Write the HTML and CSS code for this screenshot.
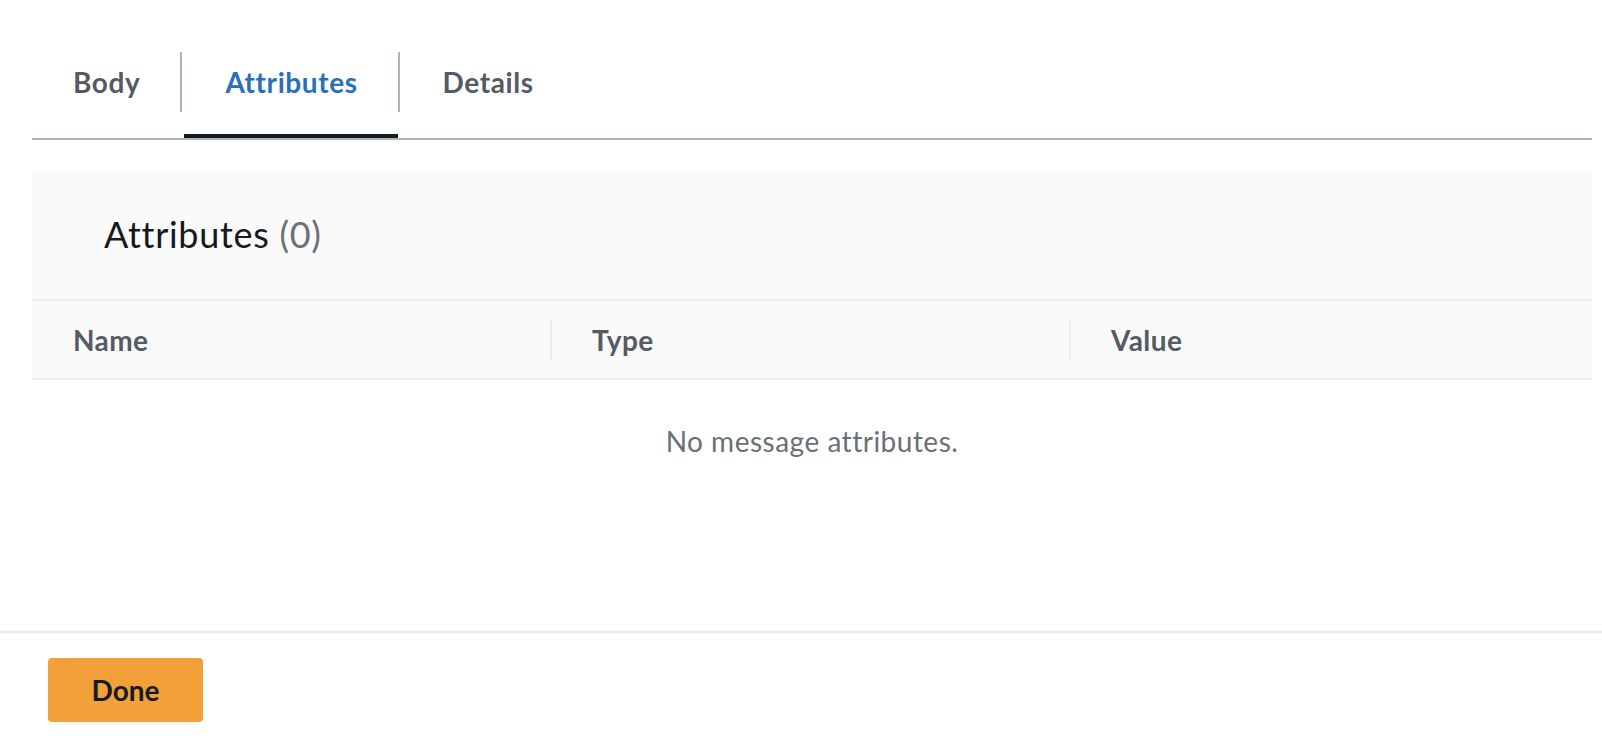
FILE: index.html
```html
<!DOCTYPE html>
<html lang="en">
<head>
    <meta charset="UTF-8">
    <meta name="viewport" content="width=device-width, initial-scale=1.0">
    <title>Message - Attributes</title>
    <link rel="stylesheet" href="styles.css">
</head>
<body>

<div class="content">
    <!-- Tabs -->
    <div class="tab-list">
        <a class="tab" href="#">Body</a>
        <span class="tab-divider"></span>
        <a class="tab active" href="#">Attributes</a>
        <span class="tab-divider"></span>
        <a class="tab" href="#">Details</a>
    </div>

    <!-- Attributes table -->
    <div class="table-container">
        <div class="table-header">
            <h2>Attributes <span class="counter">(0)</span></h2>
        </div>
        <div class="table-row table-head">
            <div class="cell">Name</div>
            <div class="cell"><span class="cell-inner">Type</span></div>
            <div class="cell"><span class="cell-inner">Value</span></div>
        </div>
        <div class="empty">No message attributes.</div>
    </div>
</div>

<!-- Footer -->
<div class="footer">
    <button class="btn-primary">Done</button>
</div>

</body>
</html>
```

FILE: styles.css
```css
/* General Styles */
body {
    font-family: Lato, "Liberation Sans", Arial, sans-serif;
    margin: 0;
    padding: 0;
    background-color: #ffffff;
    color: #16191f;
}

.content {
    height: 631px;
    padding: 52px 10px 0 32px;
    box-sizing: border-box;
}

/* Tabs */
.tab-list {
    display: flex;
    border-bottom: 2px solid #aab7b8;
}

.tab {
    display: block;
    padding: 0 40px 22px 41px;
    line-height: 60px;
    font-size: 28px;
    font-weight: bold;
    letter-spacing: 0.6px;
    color: #545b64;
    text-decoration: none;
    border-bottom: 4px solid transparent;
}

.tab:first-child {
    padding-left: 41px;
}

.tab.active {
    color: #2a70b8;
    border-bottom-color: #16191f;
}

.tab-divider {
    width: 2px;
    height: 60px;
    margin-right: 2px;
    background-color: #aab7b8;
}

/* Table */
.table-container {
    margin-top: 32px;
}

.table-header {
    background-color: #fafafa;
    padding: 40px 72px 43px;
    border-bottom: 2px solid #eaeded;
}

.table-header h2 {
    margin: 0;
    font-size: 36px;
    font-weight: normal;
    line-height: 44px;
    letter-spacing: 0.7px;
}

.counter {
    color: #687078;
}

.table-row {
    display: grid;
    grid-template-columns: 518px 519px 1fr;
}

.table-head {
    background-color: #fafafa;
    border-bottom: 2px solid #eaeded;
    padding: 19px 0 18px;
}

.cell {
    font-size: 28px;
    font-weight: bold;
    letter-spacing: 0.4px;
    color: #545b64;
    line-height: 34px;
}

.cell:first-child {
    padding: 3px 0 3px 41px;
}

.cell-inner {
    display: block;
    border-left: 2px solid #eaeded;
    padding: 3px 0 3px 40px;
}

.empty {
    padding: 44px 0;
    text-align: center;
    font-size: 28px;
    line-height: 34px;
    letter-spacing: 0.5px;
    color: #687078;
}

/* Footer */
.footer {
    border-top: 2px solid #eaeded;
    padding: 25px 0 0 48px;
}

.btn-primary {
    width: 155px;
    height: 64px;
    font-family: Lato, "Liberation Sans", Arial, sans-serif;
    font-size: 28px;
    font-weight: bold;
    color: #16191f;
    background-color: #f2a03a;
    border: none;
    border-radius: 4px;
    cursor: pointer;
}
```
